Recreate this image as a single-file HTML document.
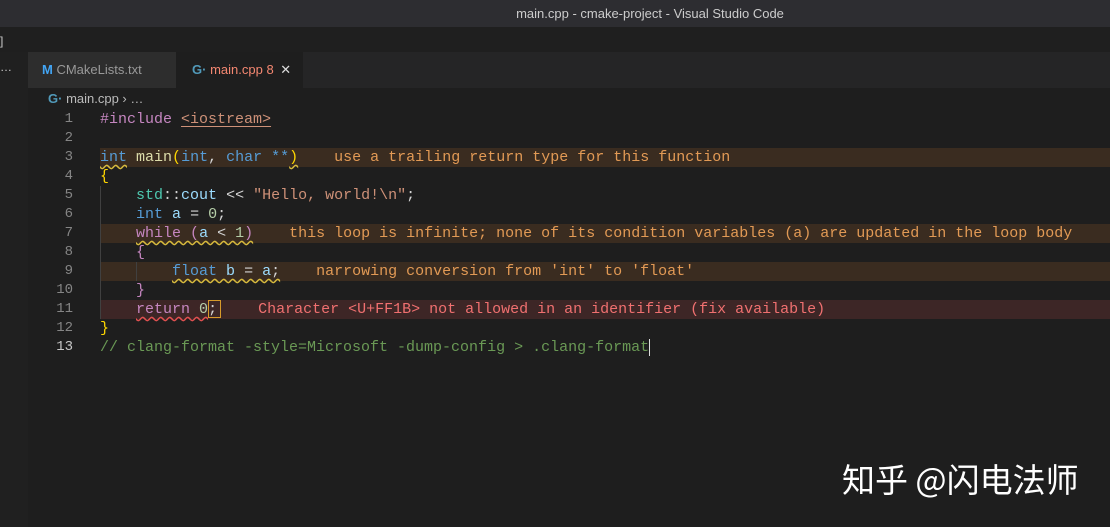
<!DOCTYPE html><html><head><meta charset="utf-8"><style>
body{margin:0;width:1110px;height:527px;background:#1e1e1e;overflow:hidden;position:relative;font-family:"Liberation Sans","Noto Sans CJK SC",sans-serif}
.a{position:absolute}
.code{font-family:"Liberation Mono",monospace;font-size:15px;white-space:pre;color:#d4d4d4}
.ln{position:absolute;left:40px;width:33px;text-align:right;font-family:"Liberation Mono",monospace;font-size:14px;color:#858585}
.row{position:absolute;left:100px;height:19px;line-height:19px}
.hl{position:absolute;left:100px;right:0;height:19px}
.k{color:#c586c0}.t{color:#569cd6}.f{color:#dcdcaa}.s{color:#ce9178}.n{color:#b5cea8}.v{color:#9cdcfe}.c{color:#6a9955}.w{color:#e29a55}.e{color:#f07070}.y{color:#ffd700}.ns{color:#4ec9b0}
.sq{text-decoration:underline wavy #d7ba3d;text-underline-offset:3px}
.sqr{text-decoration:underline wavy #e05050;text-underline-offset:3px}
</style></head><body>
<div class="a" style="left:0;top:0;width:1110px;height:27px;background:#2d2d31;color:#ccc;font-size:13px;line-height:27px;text-align:center;padding-left:190px;box-sizing:border-box">main.cpp - cmake-project - Visual Studio Code</div>
<div class="a" style="left:0;top:27px;width:1110px;height:25px;background:#1f1f1f"></div>
<div class="a" style="left:0;top:34px;color:#ccc;font-size:12px">]</div>
<div class="a" style="left:0;top:52px;width:28px;height:475px;background:#202020"></div>
<div class="a" style="left:0;top:60px;color:#ccc;font-size:12px">…</div>
<div class="a" style="left:28px;top:52px;width:1082px;height:36px;background:#252526"></div>
<div class="a" style="left:28px;top:52px;width:148px;height:36px;background:#2d2d2d;color:#999;font-size:13px;line-height:36px"><span style="color:#42a5f5;font-weight:bold;margin-left:14px">M</span> CMakeLists.txt</div>
<div class="a" style="left:176px;top:52px;width:127px;height:36px;background:#1e1e1e;font-size:13px;line-height:36px"><span style="color:#519aba;font-weight:bold;margin-left:16px">G·</span> <span style="color:#f48771">main.cpp 8</span> <span style="color:#ddd;margin-left:3px">✕</span></div>
<div class="a" style="left:48px;top:91px;font-size:13px;color:#bbb"><span style="color:#519aba;font-weight:bold">G·</span> main.cpp › …</div>
<div class="hl" style="top:148px;background:#3a2c20"></div>
<div class="hl" style="top:224px;background:#3a2c20"></div>
<div class="hl" style="top:262px;background:#3a2c20"></div>
<div class="hl" style="top:300px;background:#3d2626"></div>
<div class="a" style="left:208px;top:300px;width:13px;height:18px;border:1px solid #d89b2a;box-sizing:border-box"></div>
<div class="a" style="left:100px;top:186px;width:1px;height:133px;background:#404040"></div>
<div class="a" style="left:136px;top:262px;width:1px;height:19px;background:#404040"></div>
<div class="ln" style="top:111px">1</div><div class="ln" style="top:130px">2</div><div class="ln" style="top:149px">3</div><div class="ln" style="top:168px">4</div><div class="ln" style="top:187px">5</div><div class="ln" style="top:206px">6</div><div class="ln" style="top:225px">7</div><div class="ln" style="top:244px">8</div><div class="ln" style="top:263px">9</div><div class="ln" style="top:282px">10</div><div class="ln" style="top:301px">11</div><div class="ln" style="top:320px">12</div><div class="ln" style="top:339px;color:#c6c6c6">13</div>
<div class="code">
<div class="row" style="top:110px"><span class="k">#include</span> <span class="s" style="text-decoration:underline;text-underline-offset:3px">&lt;iostream&gt;</span></div>
<div class="row" style="top:148px"><span class="t sq">int</span> <span class="f">main</span><span class="y">(</span><span class="t">int</span>, <span class="t">char</span> <span class="t">**</span><span class="y sq">)</span>    <span class="w">use a trailing return type for this function</span></div>
<div class="row" style="top:167px"><span class="y">{</span></div>
<div class="row" style="top:186px">    <span class="ns">std</span>::<span class="v">cout</span> &lt;&lt; <span class="s">"Hello, world!\n"</span>;</div>
<div class="row" style="top:205px">    <span class="t">int</span> <span class="v">a</span> = <span class="n">0</span>;</div>
<div class="row" style="top:224px">    <span class="sq"><span class="k">while</span> <span class="k">(</span><span class="v">a</span> &lt; <span class="n">1</span><span class="k">)</span></span>    <span class="w">this loop is infinite; none of its condition variables (a) are updated in the loop body</span></div>
<div class="row" style="top:243px">    <span class="k">{</span></div>
<div class="row" style="top:262px">        <span class="sq"><span class="t">float</span> <span class="v">b</span> = <span class="v">a</span>;</span>    <span class="w">narrowing conversion from 'int' to 'float'</span></div>
<div class="row" style="top:281px">    <span class="k">}</span></div>
<div class="row" style="top:300px">    <span class="sqr"><span class="k">return</span> <span class="n">0</span></span>;    <span class="e" style="margin-left:5px">Character &lt;U+FF1B&gt; not allowed in an identifier (fix available)</span></div>
<div class="row" style="top:319px"><span class="y">}</span></div>
<div class="row" style="top:338px"><span class="c">// clang-format -style=Microsoft -dump-config &gt; .clang-format</span><span style="border-left:1px solid #ddd"></span></div>
</div>
<div class="a" style="left:842px;top:455px;font-size:33px;color:#fff;font-family:'Noto Sans CJK SC',sans-serif;line-height:46px">知乎 @闪电法师</div>
</body></html>
